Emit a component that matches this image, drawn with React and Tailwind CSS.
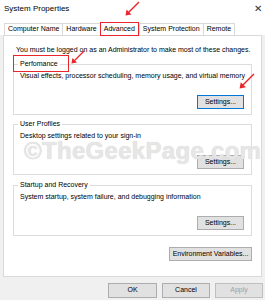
import React from 'react';

const Arrow = ({ className }) => (
  <svg className={className} viewBox="0 0 16 16" fill="none">
    <line x1="15" y1="1" x2="3" y2="13" stroke="#e8262b" strokeWidth="1.4" />
    <path d="M1.5 14.5 L2.6 8.6 L7.4 13.4 Z" fill="#e8262b" />
  </svg>
);

const Btn = ({ children, className = '', focused = false, disabled = false }) => (
  <div
    className={`flex items-center justify-center h-[14px] bg-[#e1e1e1] border text-[7px] ${
      focused ? 'border-[#0078d7]' : 'border-[#adadad]'
    } ${disabled ? 'bg-[#cccccc] border-[#bfbfbf] text-[#a0a0a0]' : 'text-black'} ${className}`}
  >
    {children}
  </div>
);

const Group = ({ title, text, focused, titleBox = false, className = '' }) => (
  <div className={`relative border border-[#dcdcdc] ${className}`}>
    <div className="absolute -top-[6px] left-[4px] bg-white px-[2px] text-[7px] leading-[10px] text-black">
      {title}
    </div>
    {titleBox && (
      <div className="absolute -top-[10px] -left-[1px] w-[56px] h-[17px] border-[1.5px] border-[#e8262b]" />
    )}
    <div className="pt-[6px] pl-[6px] text-[7px] leading-[10px] text-black">{text}</div>
    <div className="flex justify-end pr-[7px] pt-[14px] pb-[5px]">
      <Btn focused={focused} className="w-[47px]">Settings...</Btn>
    </div>
  </div>
);

export default function App() {
  const tabs = ['Computer Name', 'Hardware', 'Advanced', 'System Protection', 'Remote'];
  return (
    <div
      className="relative w-[265px] h-[300px] overflow-hidden bg-[#f0f0f0]"
      style={{ fontFamily: '"Liberation Sans", Arial, sans-serif' }}
    >
      {/* Title bar */}
      <div className="flex items-center justify-between h-[18px] bg-white pl-[4px] pr-[3px]">
        <span className="text-[8px] text-black">System Properties</span>
        <span className="text-[10px] text-[#333] leading-none">✕</span>
      </div>

      {/* Tabs */}
      <div className="relative flex items-end h-[17px] pl-[4px] bg-white">
        {tabs.map((t) =>
          t === 'Advanced' ? (
            <div
              key={t}
              className="relative z-10 h-[14px] px-[3px] flex items-center bg-white border-[1.5px] border-[#e8262b] -mb-[1px] text-[7px] text-black"
            >
              {t}
            </div>
          ) : (
            <div
              key={t}
              className="h-[12px] px-[3px] flex items-center bg-white border border-[#d9d9d9] border-b-0 -mr-[1px] text-[7px] text-black"
            >
              {t}
            </div>
          )
        )}
      </div>

      {/* Panel */}
      <div className="mx-[3px] h-[242px] bg-white border border-[#d9d9d9] px-[9px]">
        <div className="pt-[9px] pl-[3px] text-[7px] leading-[10px] text-black">
          You must be logged on as an Administrator to make most of these changes.
        </div>
        <Group
          title="Perfomance"
          text="Visual effects, processor scheduling, memory usage, and virtual memory"
          focused
          titleBox
          className="mt-[9px]"
        />
        <Group
          title="User Profiles"
          text="Desktop settings related to your sign-in"
          className="mt-[9px]"
        />
        <Group
          title="Startup and Recovery"
          text="System startup, system failure, and debugging information"
          className="mt-[10px]"
        />
        <div className="flex justify-end pt-[11px]">
          <Btn className="w-[83px] h-[14px]">Environment Variables...</Btn>
        </div>
      </div>

      {/* Bottom buttons */}
      <div className="flex justify-end gap-[5px] pr-[2px] pt-[6px]">
        <Btn className="w-[49px] h-[15px]">OK</Btn>
        <Btn className="w-[48px] h-[15px]">Cancel</Btn>
        <Btn disabled className="w-[48px] h-[15px]">Apply</Btn>
      </div>

      {/* Annotations and watermark */}
      <Arrow className="absolute left-[124px] top-[1px] w-[16px] h-[16px]" />
      <Arrow className="absolute left-[70px] top-[50px] w-[15px] h-[15px]" />
      <Arrow className="absolute left-[238px] top-[73px] w-[17px] h-[17px]" />
      <div className="absolute left-[24px] top-[139px] text-[24px] font-bold text-[#e6e6e6] leading-none tracking-[0.3px] pointer-events-none [text-shadow:0_0_1px_#cfcfcf]">
        ©TheGeekPage.com
      </div>
    </div>
  );
}
